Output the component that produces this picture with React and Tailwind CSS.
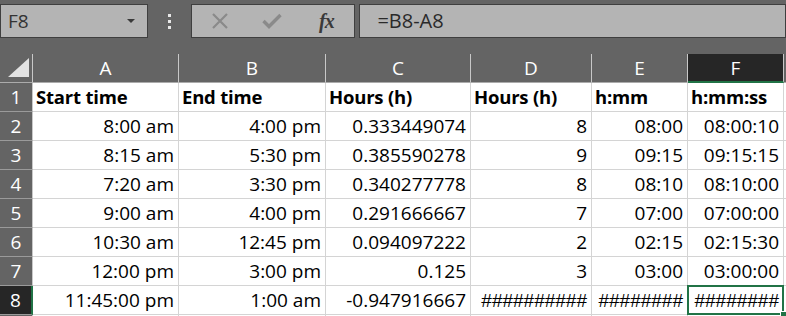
import React from "react";

const cols = ["A", "B", "C", "D", "E", "F"];

const rows = [
  ["8:00 am", "4:00 pm", "0.333449074", "8", "08:00", "08:00:10"],
  ["8:15 am", "5:30 pm", "0.385590278", "9", "09:15", "09:15:15"],
  ["7:20 am", "3:30 pm", "0.340277778", "8", "08:10", "08:10:00"],
  ["9:00 am", "4:00 pm", "0.291666667", "7", "07:00", "07:00:00"],
  ["10:30 am", "12:45 pm", "0.094097222", "2", "02:15", "02:15:30"],
  ["12:00 pm", "3:00 pm", "0.125", "3", "03:00", "03:00:00"],
  ["11:45:00 pm", "1:00 am", "-0.947916667", "##########", "########", "########"],
];

const titles = ["Start time", "End time", "Hours (h)", "Hours (h)", "h:mm", "h:mm:ss"];

const gridCols = "grid grid-cols-[33px_146px_147px_145px_121px_96px_96px_2px]";

const App = () => {
  return (
    <div className="w-[786px] h-[316px] overflow-hidden bg-[#646464] font-['Open_Sans',sans-serif] text-[19px] leading-none select-none">
      {/* toolbar */}
      <div className="flex h-[54px] pt-[4px]">
        <div className="w-[152px] h-[34px] bg-[#b4b4b4] border border-[#3f3f3f] flex items-center justify-between pl-[7px] pr-[12px] text-[#333]">
          <span>F8</span>
          <svg width="8" height="4" viewBox="0 0 8 4">
            <path d="M0 0h8L4 4z" fill="#3a3a3a" />
          </svg>
        </div>
        <div className="w-[45px] h-[34px] flex flex-col items-center justify-center gap-[3px]">
          <span className="w-[3px] h-[3px] bg-[#e8e8e8]" />
          <span className="w-[3px] h-[3px] bg-[#e8e8e8]" />
          <span className="w-[3px] h-[3px] bg-[#e8e8e8]" />
        </div>
        <div className="w-[165px] h-[34px] bg-[#b4b4b4] border border-[#3f3f3f] flex items-center pl-[2px]">
          <div className="w-[52px] flex justify-center">
            <svg width="18" height="18" viewBox="0 0 18 18">
              <path d="M2 2L16 16M16 2L2 16" stroke="#8a8a8a" strokeWidth="2.2" />
            </svg>
          </div>
          <div className="w-[52px] flex justify-center">
            <svg width="20" height="16" viewBox="0 0 20 16">
              <path d="M1.5 8L7 13.5L18.5 2" stroke="#8a8a8a" strokeWidth="3.4" fill="none" />
            </svg>
          </div>
          <div className="w-[56px] flex justify-center font-['Liberation_Serif',serif] italic font-bold text-[20px] text-[#3a3a3a] tracking-[-1px]">
            fx
          </div>
        </div>
        <div className="ml-[4px] w-[440px] h-[34px] bg-[#b4b4b4] border border-[#3f3f3f] flex items-center pl-[17px] text-[#2a2a2a] text-[20px]">
          =B8-A8
        </div>
      </div>

      {/* column headers */}
      <div className={`${gridCols} h-[29px]`}>
        <div className="relative border-r border-[#c8c8c8] border-b border-b-[#ababab]">
          <svg className="absolute left-[8px] top-[4px]" width="22" height="20" viewBox="0 0 22 20">
            <path d="M21 0V19H0z" fill="#e2e2e2" />
          </svg>
        </div>
        {cols.map((c) =>
          c === "F" ? (
            <div
              key={c}
              className="bg-[#262626] text-white flex items-center justify-center border-b-2 border-[#217346] border-r border-r-[#c8c8c8] pt-[2px]"
            >
              {c}
            </div>
          ) : (
            <div
              key={c}
              className="text-white flex items-center justify-center border-r border-[#c8c8c8] border-b border-b-[#ababab] pt-[1px]"
            >
              {c}
            </div>
          )
        )}
        <div className="border-b border-[#ababab]" />
      </div>

      {/* row 1 */}
      <div className={`${gridCols} h-[29px]`}>
        <div className="text-white flex items-center justify-center border-b border-[#9a9a9a] border-r border-r-[#c8c8c8] pt-[1px]">
          1
        </div>
        {titles.map((t, i) => (
          <div
            key={i}
            className="bg-white font-bold text-black flex items-center pl-[3px] border-r border-b border-[#d4d4d4] pt-[1px] text-[18.5px] tracking-[-0.2px]"
          >
            {t}
          </div>
        ))}
        <div className="bg-white border-b border-[#d4d4d4]" />
      </div>

      {rows.map((r, ri) => {
        const n = ri + 2;
        const last = n === 8;
        return (
          <div key={n} className={`${gridCols} h-[29px]`}>
            {last ? (
              <div className="bg-[#262626] text-white flex items-center justify-center border-b border-[#9a9a9a] border-r-2 border-r-[#217346] pt-[1px]">
                {n}
              </div>
            ) : (
              <div className="text-white flex items-center justify-center border-b border-[#9a9a9a] border-r border-r-[#c8c8c8] pt-[1px]">
                {n}
              </div>
            )}
            {r.map((v, ci) => {
              const hash = v.startsWith("#");
              const selected = last && ci === 5;
              return (
                <div
                  key={ci}
                  className={`relative bg-white text-black flex items-center justify-end pr-[4px] border-r border-b border-[#d4d4d4] pt-[1px] ${
                    hash ? "font-['Liberation_Sans',sans-serif] text-[19px]" : ""
                  }`}
                >
                  {v}
                  {selected && (
                    <>
                      <div className="absolute -left-[1px] -top-[1px] -right-[1px] -bottom-[1px] border-2 border-[#217346]" />
                      <div className="absolute -right-[4px] -bottom-[4px] w-[7px] h-[7px] bg-[#217346] border border-white" />
                    </>
                  )}
                </div>
              );
            })}
            <div className="bg-white border-b border-[#d4d4d4]" />
          </div>
        );
      })}
      <div className={`${gridCols} h-[29px]`}>
        <div className="border-r border-[#c8c8c8]" />
        {cols.map((c) => (
          <div key={c} className="bg-white border-r border-[#d4d4d4]" />
        ))}
        <div className="bg-white" />
      </div>
    </div>
  );
};

export default App;
